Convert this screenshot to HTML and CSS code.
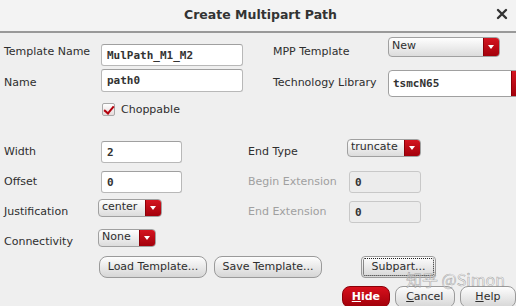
FILE: index.html
```html
<!DOCTYPE html>
<html lang="en">

<head>
    <meta charset="UTF-8">
    <title>Create Multipart Path</title>
    <link rel="stylesheet" href="styles.css">
</head>

<body>
    <div class="dialog">
        <div class="titlebar">
            <span class="title">Create Multipart Path</span>
            <svg class="close" width="12" height="12" viewBox="0 0 12 12">
                <path d="M2 2 L10 10 M10 2 L2 10" stroke="#333" stroke-width="2.4" stroke-linecap="round"/>
            </svg>
        </div>

        <div class="top">
            <label class="lbl">Template Name</label>
            <div class="input wide mono">MulPath_M1_M2</div>
            <label class="lbl">MPP Template</label>
            <div class="combo combo-new"><span class="combo-text">New</span><span class="arrow"></span></div>

            <label class="lbl">Name</label>
            <div class="input wide mono">path0</div>
            <label class="lbl">Technology Library</label>
            <div class="combo combo-edit"><span class="combo-text mono">tsmcN65</span><span class="arrow"></span></div>

            <span></span>
            <div class="check-row"><span class="checkbox"></span>Choppable</div>
        </div>

        <div class="grid">
            <label class="lbl">Width</label>
            <div class="input short mono">2</div>
            <label class="lbl">End Type</label>
            <div class="combo combo-trunc"><span class="combo-text">truncate</span><span class="arrow"></span></div>

            <label class="lbl">Offset</label>
            <div class="input short mono">0</div>
            <label class="lbl dim">Begin Extension</label>
            <div class="input ext mono disabled">0</div>

            <label class="lbl">Justification</label>
            <div class="combo combo-center"><span class="combo-text">center</span><span class="arrow"></span></div>
            <label class="lbl dim">End Extension</label>
            <div class="input ext mono disabled">0</div>

            <label class="lbl">Connectivity</label>
            <div class="combo combo-none"><span class="combo-text">None</span><span class="arrow"></span></div>
        </div>

        <div class="buttons">
            <button class="btn btn-load">Load Template...</button>
            <button class="btn btn-save">Save Template...</button>
            <button class="btn btn-sub">Subpart...</button>
        </div>

        <div class="actions">
            <button class="btn btn-hide"><u>H</u>ide</button>
            <button class="btn btn-cancel"><u>C</u>ancel</button>
            <button class="btn btn-help"><u>H</u>elp</button>
        </div>

        <!-- watermark over the buttons -->
        <div class="watermark">知乎 @Simon</div>
    </div>
</body>

</html>
```

FILE: styles.css
```css
body {
    margin: 0;
    padding: 0;
    width: 516px;
    height: 306px;
    overflow: hidden;
    background-color: #efefef;
    font-family: 'DejaVu Sans', sans-serif;
    font-size: 11px;
    color: #2e2e2e;
}

.dialog {
    position: relative;
    width: 516px;
    height: 306px;
    overflow: hidden;
}

.titlebar {
    height: 31px;
    background-color: #f3f3f3;
    border-bottom: 2px solid #999;
    display: flex;
    align-items: center;
    justify-content: center;
    position: relative;
}

.title {
    font-size: 12.5px;
    font-weight: bold;
    color: #333;
    margin-left: 5px;
    margin-top: -2px;
}

.close {
    position: absolute;
    right: 8px;
    top: 8px;
}

.mono {
    font-family: 'DejaVu Sans Mono', monospace;
    font-weight: bold;
    color: #333;
}

.lbl {
    display: flex;
    align-items: center;
    padding-left: 4px;
    white-space: nowrap;
}

.dim {
    color: #a0a0a0;
}

/* Top block */
.top {
    display: grid;
    grid-template-columns: 101px 172px 115px 1fr;
    grid-template-rows: 30px 32px 22px;
    margin-top: 3px;
}

.top .lbl:nth-child(3),
.top .lbl:nth-child(7) {
    padding-left: 0;
}

.input {
    box-sizing: border-box;
    height: 22px;
    background-color: #fff;
    border: 1px solid #b8b8b8;
    border-top-color: #a0a0a0;
    border-radius: 3px;
    padding: 0 5px;
    display: flex;
    align-items: center;
    align-self: end;
}

.wide {
    width: 142px;
}

.short {
    width: 81px;
}

.ext {
    width: 72px;
    margin-left: 2px;
}

.disabled {
    background-color: #ececec;
    border-color: #c8c8c8;
}

.top .input:nth-child(6) {
    align-self: start;
    margin-top: 3px;
    height: 23px;
}

.combo {
    box-sizing: border-box;
    display: flex;
    align-items: center;
    height: 20px;
    border: 1px solid #a0a0a0;
    border-radius: 4px;
    background: linear-gradient(#fefefe, #dcdcdc);
    overflow: hidden;
    align-self: start;
}

.combo-text {
    flex: 1;
    padding-left: 3px;
    margin-top: -3px;
    white-space: nowrap;
}

.arrow {
    position: relative;
    width: 15px;
    height: 100%;
    background: linear-gradient(#d41520, #a3000b);
    border-left: 1px solid #8a0008;
}

.arrow::after {
    content: "";
    position: absolute;
    left: 4px;
    top: 7px;
    border-left: 3px solid transparent;
    border-right: 3px solid transparent;
    border-top: 4px solid #fff;
}

.combo-new {
    width: 112px;
    margin-top: 1px;
}

.combo-edit {
    width: 140px;
    height: 27px;
    background: #fff;
    margin-top: 4px;
}

.combo-edit .combo-text {
    margin-top: 0;
    padding-left: 4px;
}

.combo-edit .arrow::after {
    top: 11px;
}

.check-row {
    display: flex;
    align-items: center;
    gap: 6px;
    padding-left: 1px;
    grid-column: 2 / 4;
}

.checkbox {
    position: relative;
    box-sizing: border-box;
    width: 13px;
    height: 13px;
    border: 1px solid #a9a9a9;
    border-radius: 2px;
    background: linear-gradient(#fff, #e6dada);
}

.checkbox::after {
    content: "";
    position: absolute;
    left: 3px;
    top: 0;
    width: 4px;
    height: 8px;
    border-right: 2px solid #b3000c;
    border-bottom: 2px solid #b3000c;
    transform: rotate(40deg);
}

/* Lower grid */
.grid {
    display: grid;
    grid-template-columns: 97px 150px 100px 1fr;
    grid-auto-rows: 30px;
    margin-top: 17px;
}

.grid .lbl {
    align-items: flex-start;
    padding-top: 8px;
    box-sizing: border-box;
}

.grid .lbl:nth-child(3),
.grid .lbl:nth-child(7),
.grid .lbl:nth-child(11) {
    padding-left: 1px;
}

.grid .input {
    align-self: start;
    margin-top: 4px;
}

.grid .short {
    margin-left: 4px;
}

.grid .combo {
    height: 18px;
    margin-top: 2px;
}

.grid .combo .arrow::after {
    top: 6px;
}

.combo-trunc {
    width: 74px;
}

.combo-center {
    width: 64px;
    margin-left: 1px;
}

.combo-none {
    width: 58px;
    margin-left: 1px;
}

/* Buttons */
.buttons {
    display: flex;
    height: 22px;
    padding-left: 99px;
    margin-top: -1px;
}

.btn {
    box-sizing: border-box;
    height: 22px;
    font-family: 'DejaVu Sans', sans-serif;
    font-size: 11px;
    color: #2e2e2e;
    border: 1px solid #9a9a9a;
    border-radius: 8px;
    background: linear-gradient(#fdfdfd, #d6d6d6);
    padding: 0;
    padding-bottom: 2px;
}

.btn-load {
    width: 108px;
}

.btn-save {
    width: 108px;
    margin-left: 7px;
}

.btn-sub {
    width: 75px;
    margin-left: 39px;
    border-radius: 4px;
    outline: 1px dotted #222;
    outline-offset: -3px;
}

.actions {
    display: flex;
    padding-left: 342px;
    margin-top: 8px;
}

.actions .btn {
    height: 22px;
}

.btn-hide {
    width: 51px;
    color: #fff;
    font-weight: bold;
    border-color: #8a0008;
    background: linear-gradient(#d8101c, #a0000a);
}

.btn-cancel {
    width: 64px;
    margin-left: 5px;
}

.btn-help {
    width: 60px;
    margin-left: 5px;
}

.watermark {
    position: absolute;
    left: 406px;
    top: 268px;
    font-family: 'Noto Sans CJK SC', 'DejaVu Sans', sans-serif;
    font-size: 16px;
    line-height: 22px;
    color: rgba(255, 255, 255, 0.55);
    -webkit-text-stroke: 0.6px rgba(120, 120, 120, 0.6);
    white-space: nowrap;
}
```
